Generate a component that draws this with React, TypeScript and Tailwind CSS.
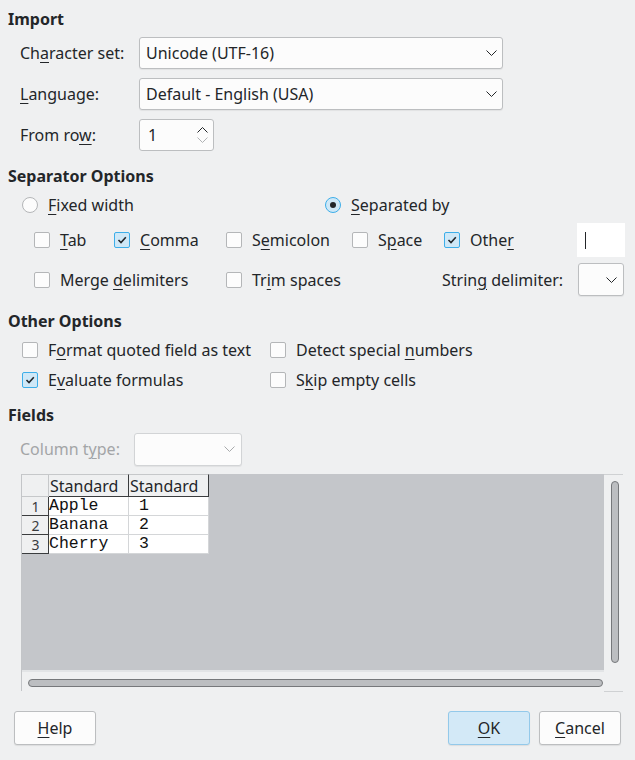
import React from "react";

const U = ({ children }: { children: React.ReactNode }) => (
  <span className="underline decoration-1 underline-offset-[3px]">{children}</span>
);

const Chevron = ({ color = "#232629", up = false }: { color?: string; up?: boolean }) => (
  <svg width="11" height="6" viewBox="0 0 11 6" className="block">
    <path
      d={up ? "M0.5 5.5 L5.5 0.5 L10.5 5.5" : "M0.5 0.5 L5.5 5.5 L10.5 0.5"}
      fill="none"
      stroke={color}
      strokeWidth="1"
    />
  </svg>
);

const Check = ({ checked = false }: { checked?: boolean }) =>
  checked ? (
    <div className="w-4 h-4 shrink-0 rounded-[2px] border border-[#3daee9] bg-[#cfe8f7] flex items-center justify-center">
      <svg width="12" height="12" viewBox="0 0 12 12">
        <path d="M2.5 6 L5 8.5 L9.8 3.2" fill="none" stroke="#232629" strokeWidth="1.6" />
      </svg>
    </div>
  ) : (
    <div className="w-4 h-4 shrink-0 rounded-[2px] border border-[#b4b6b8] bg-[#fcfcfc]" />
  );

const Radio = ({ checked = false }: { checked?: boolean }) =>
  checked ? (
    <div className="w-4 h-4 shrink-0 rounded-full border border-[#3daee9] bg-[#cfe8f7] flex items-center justify-center">
      <div className="w-[6px] h-[6px] rounded-full bg-[#232629]" />
    </div>
  ) : (
    <div className="w-4 h-4 shrink-0 rounded-full border border-[#b4b6b8] bg-[#fcfcfc]" />
  );

const Combo = ({
  text,
  className,
  disabled = false,
}: {
  text?: string;
  className: string;
  disabled?: boolean;
}) => (
  <div
    className={
      "flex items-center justify-between rounded-[3px] border bg-[#fcfcfc] pl-[6px] shadow-[0_1px_1px_rgba(0,0,0,0.06)] " +
      (disabled ? "border-[#d2d4d6] " : "border-[#bcbec0] ") +
      className
    }
  >
    <span className="whitespace-nowrap">{text}</span>
    <Chevron color={disabled ? "#a8aaac" : "#232629"} />
  </div>
);

const CheckItem = ({
  checked,
  w,
  children,
}: {
  checked?: boolean;
  w: string;
  children: React.ReactNode;
}) => (
  <div className={"flex items-center gap-[10px] shrink-0 " + w}>
    <Check checked={checked} />
    <span className="whitespace-nowrap">{children}</span>
  </div>
);

const Btn = ({ children, primary = false }: { children: React.ReactNode; primary?: boolean }) => (
  <div
    className={
      "w-[82px] h-[34px] flex items-center justify-center rounded-[3px] border shadow-[0_1px_1px_rgba(0,0,0,0.08)] " +
      (primary ? "bg-[#d3e9f7] border-[#93c9ea]" : "bg-[#fcfcfc] border-[#bcbec0]")
    }
  >
    {children}
  </div>
);

export default function App() {
  const rows = [
    ["1", "Apple", " 1"],
    ["2", "Banana", " 2"],
    ["3", "Cherry", " 3"],
  ];
  return (
    <div className="w-[635px] h-[760px] bg-[#eff0f1] text-[#232629] text-[16px] leading-[22px] font-['Noto_Sans',sans-serif] flex flex-col overflow-hidden">
      <div className="h-[22px] mt-2 ml-2 font-bold">Import</div>

      <div className="flex items-center h-8 mt-[7px] ml-5">
        <div className="w-[119px] whitespace-nowrap">
          Ch<U>a</U>racter set:
        </div>
        <Combo text="Unicode (UTF-16)" className="w-[364px] h-8 pr-[5px]" />
      </div>

      <div className="flex items-center h-8 mt-[9px] ml-5">
        <div className="w-[119px] whitespace-nowrap">
          <U>L</U>anguage:
        </div>
        <Combo text="Default - English (USA)" className="w-[364px] h-8 pr-[5px]" />
      </div>

      <div className="flex items-center h-8 mt-[9px] ml-5">
        <div className="w-[119px] whitespace-nowrap">
          From ro<U>w</U>:
        </div>
        <div className="w-[75px] h-[32px] rounded-[3px] border border-[#bcbec0] bg-[#fcfcfc] flex items-center justify-between pl-[8px] pr-[5px]">
          <span>1</span>
          <div className="flex flex-col gap-[4px]">
            <Chevron up color="#232629" />
            <Chevron color="#b0b2b4" />
          </div>
        </div>
      </div>

      <div className="h-[22px] mt-[14px] ml-2 font-bold">Separator Options</div>

      <div className="flex items-center h-[30px] mt-[3px] ml-[22px]">
        <div className="flex items-center gap-[10px] w-[303px]">
          <Radio />
          <span>
            <U>F</U>ixed width
          </span>
        </div>
        <div className="flex items-center gap-[10px]">
          <Radio checked />
          <span>
            <U>S</U>eparated by
          </span>
        </div>
      </div>

      <div className="flex items-center h-[34px] mt-[3px] ml-[34px]">
        <CheckItem w="w-[80px]">
          <U>T</U>ab
        </CheckItem>
        <CheckItem w="w-[112px]" checked>
          <U>C</U>omma
        </CheckItem>
        <CheckItem w="w-[126px]">
          S<U>e</U>micolon
        </CheckItem>
        <CheckItem w="w-[92px]">
          S<U>p</U>ace
        </CheckItem>
        <CheckItem w="w-[133px]" checked>
          Othe<U>r</U>
        </CheckItem>
        <div className="w-[48px] h-[34px] bg-white flex items-center pl-[8px]">
          <div className="w-px h-[17px] bg-[#232629]" />
        </div>
      </div>

      <div className="flex items-center h-[33px] mt-[6px] ml-[34px]">
        <CheckItem w="w-[192px]">
          Merge <U>d</U>elimiters
        </CheckItem>
        <CheckItem w="w-[216px]">
          Tr<U>i</U>m spaces
        </CheckItem>
        <div className="w-[136px] whitespace-nowrap">
          Strin<U>g</U> delimiter:
        </div>
        <Combo className="w-[46px] h-[33px] pr-[6px]" />
      </div>

      <div className="h-[22px] mt-[14px] ml-2 font-bold">Other Options</div>

      <div className="flex items-center h-[30px] mt-[3px] ml-[22px]">
        <CheckItem w="w-[248px]">
          F<U>o</U>rmat quoted field as text
        </CheckItem>
        <CheckItem w="w-[250px]">
          Detect special <U>n</U>umbers
        </CheckItem>
      </div>
      <div className="flex items-center h-[30px] ml-[22px]">
        <CheckItem w="w-[248px]" checked>
          E<U>v</U>aluate formulas
        </CheckItem>
        <CheckItem w="w-[250px]">
          S<U>k</U>ip empty cells
        </CheckItem>
      </div>

      <div className="h-[22px] mt-[9px] ml-2 font-bold">Fields</div>

      <div className="flex items-center h-8 mt-[7px] ml-5">
        <div className="w-[114px] whitespace-nowrap text-[#a3a5a7]">
          Column t<U>y</U>pe:
        </div>
        <Combo disabled className="w-[108px] h-[33px] pr-[6px]" />
      </div>

      <div className="ml-[21px] mt-[9px] flex h-[217px] w-[602px]">
        <div className="w-[583px] border-l border-[#c3c5c8] flex flex-col">
          <div className="h-[196px] bg-[#c4c6ca]">
            <div className="flex h-[23px]">
              <div className="w-[27px] h-[23px] bg-[#eff0f1] border-t border-r border-b border-[#c6c8ca]" />
              {["Standard", "Standard"].map((h, i) => (
                <div
                  key={i}
                  className="w-[80px] h-[23px] bg-[#eff0f1] border-t border-t-[#c6c8ca] border-b border-b-[#3a3c3e] border-r border-r-[#3a3c3e] pl-[1px] leading-[22px] whitespace-nowrap"
                >
                  {h}
                </div>
              ))}
            </div>
            {rows.map((r) => (
              <div key={r[0]} className="flex h-[19px]">
                <div className="w-[27px] h-[19px] bg-[#eff0f1] border-r border-b border-[#3a3c3e] flex items-end justify-center pl-[1px] pb-[1px] text-[14px] leading-[14px] text-[#3a3c3e] overflow-hidden">
                  {r[0]}
                </div>
                <div className="w-[80px] h-[19px] bg-white border-r border-b border-[#d4d6d8] font-['Liberation_Mono',monospace] text-[16.5px] leading-[18px] whitespace-pre text-[#111]">
                  {r[1]}
                </div>
                <div className="w-[80px] h-[19px] bg-white border-r border-b border-[#d4d6d8] font-['Liberation_Mono',monospace] text-[16.5px] leading-[18px] whitespace-pre text-[#111]">
                  {r[2]}
                </div>
              </div>
            ))}
          </div>
          <div className="h-[2px] bg-[#e2e4e6]" />
          <div className="flex-1 pt-[7px] pl-[6px]">
            <div className="w-[575px] h-[8px] rounded-full bg-[#bcbec1] border border-[#76787b]" />
          </div>
        </div>
        <div className="w-[19px] flex flex-col">
          <div className="h-px bg-[#cfd1d3]" />
          <div className="flex-1 pt-[6px] pl-[7px]">
            <div className="w-[8px] h-[182px] rounded-full bg-[#bcbec1] border border-[#76787b]" />
          </div>
          <div className="h-px bg-[#cfd1d3] mb-[-1px]" />
        </div>
      </div>

      <div className="flex items-center h-[34px] mt-[20px] px-[14px]">
        <Btn>
          <U>H</U>elp
        </Btn>
        <div className="flex-1" />
        <Btn primary>
          <U>O</U>K
        </Btn>
        <div className="w-[9px]" />
        <Btn>
          <U>C</U>ancel
        </Btn>
      </div>
    </div>
  );
}
